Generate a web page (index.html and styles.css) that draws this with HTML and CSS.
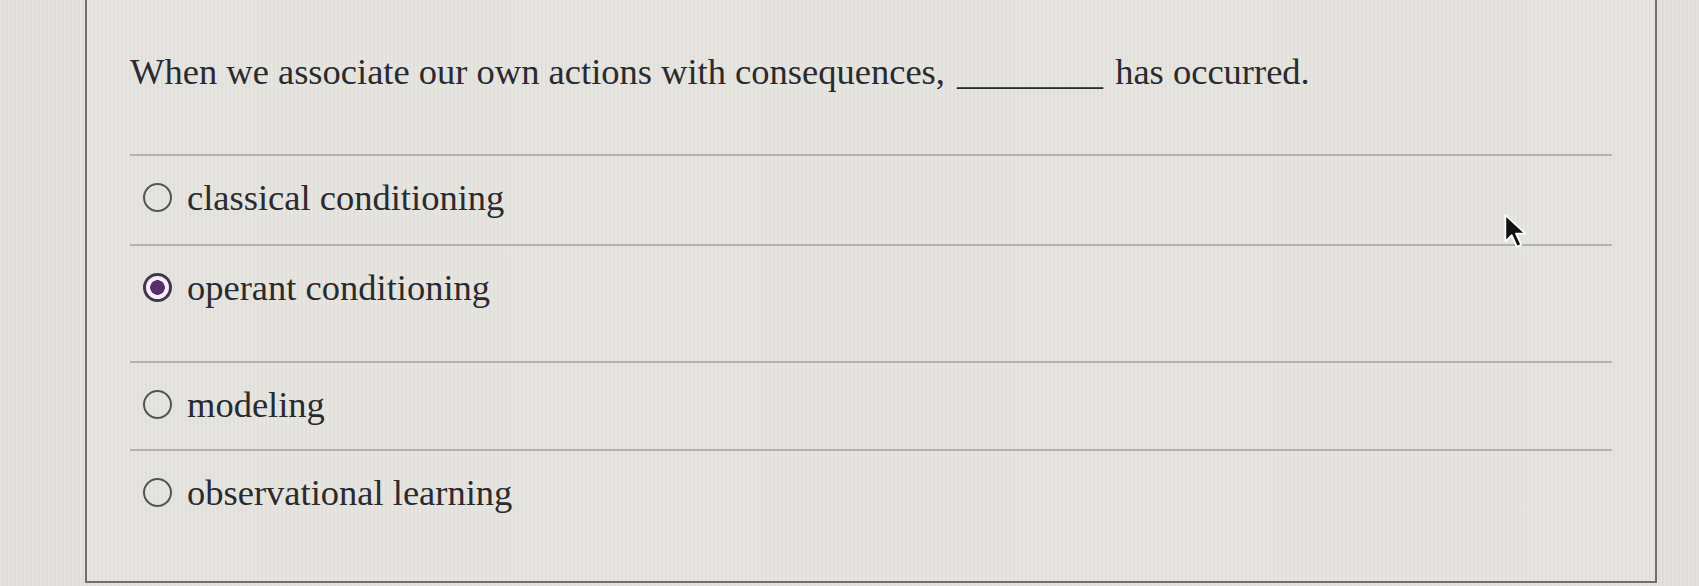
FILE: index.html
```html
<!DOCTYPE html>
<html>
<head>
<meta charset="utf-8">
<link rel="stylesheet" href="styles.css">
</head>
<body>
<div class="card">
  <p class="question">When we associate our own actions with consequences, <span class="blank">________</span> has occurred.</p>
  <div class="options">
    <label class="option r1"><span class="radio"></span><span class="label">classical conditioning</span></label>
    <label class="option r2"><span class="radio checked"></span><span class="label">operant conditioning</span></label>
    <label class="option r3"><span class="radio"></span><span class="label">modeling</span></label>
    <label class="option r4"><span class="radio"></span><span class="label">observational learning</span></label>
  </div>
</div>
<svg class="cursor" width="28" height="38" viewBox="0 0 26 36">
  <path d="M2 2 L2 27 L8 21 L13 32 L17 30 L12 19.5 L21 19.5 Z" fill="#111" stroke="#fff" stroke-width="1.6" stroke-linejoin="round"/>
</svg>
</body>
</html>
```
FILE: styles.css
```css
html, body {
  margin: 0;
  padding: 0;
}
body {
  background: #e2e0db;
  background-image: repeating-linear-gradient(90deg, rgba(255,255,255,0.10) 0 2px, rgba(0,0,0,0.015) 2px 4px);
  width: 1699px;
  height: 586px;
  overflow: hidden;
  position: relative;
  font-family: "Liberation Serif", "Times New Roman", serif;
  color: #2a2a2f;
}
.card {
  margin-left: 85px;
  width: 1572px;
  height: 583px;
  box-sizing: border-box;
  border: 2px solid #706e72;
  border-top: none;
  padding: 0 43px 0 43px;
  background: #e4e2dd;
  background-image: repeating-linear-gradient(90deg, rgba(255,255,255,0.12) 0 2px, rgba(0,0,0,0.012) 2px 4px);
}
.question {
  margin: 0;
  padding-top: 52px;
  padding-bottom: 62px;
  font-size: 36.5px;
  line-height: 40px;
  border-bottom: 2px solid #b4b2ae;
}
.blank {
  margin: 0 3px;
}
.option {
  display: flex;
  align-items: center;
  padding-top: 22px;
  font-size: 36.5px;
  line-height: 40px;
  border-bottom: 2px solid #b4b2ae;
}
.option.r1 { padding-bottom: 26px; }
.option.r2 { padding-bottom: 53px; }
.option.r3 { padding-bottom: 24px; }
.option.r4 { border-bottom: none; }
.radio {
  flex: none;
  width: 29px;
  height: 29px;
  box-sizing: border-box;
  border: 2px solid #55545a;
  border-radius: 50%;
  margin-left: 13px;
  margin-right: 15px;
  margin-top: -2px;
  background: transparent;
}
.radio.checked {
  border: 3px solid #4a3352;
  background: radial-gradient(circle, #5a2d6e 0 7px, #f4f2f4 7.6px 9px, #f4f2f4 9px);
}
.label {
  white-space: nowrap;
}
.cursor {
  position: absolute;
  left: 1503px;
  top: 213px;
}
```
